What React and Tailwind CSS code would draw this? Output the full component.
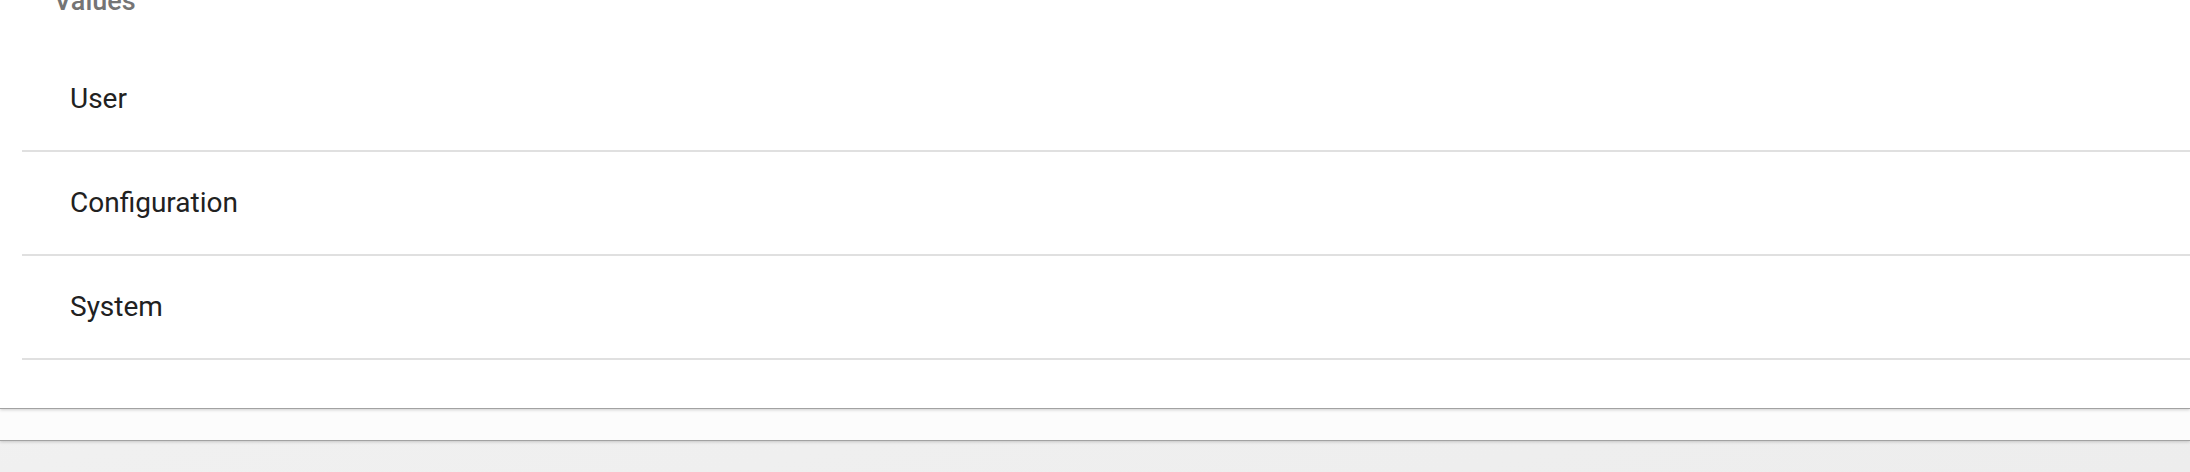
import React from 'react';

const items = ['User', 'Configuration', 'System'];

function ValuesCard() {
  return (
    <div className="relative z-20 -mt-[30px] bg-white pb-[48px] shadow-[0_1px_0_#a2a2a2,0_2px_3px_rgba(0,0,0,0.18)]">
      {/* subheader */}
      <div className="pt-[18px] pb-[34px] pl-[54px]">
        <div className="text-[27px] leading-[26px] font-medium text-[#757575]">Values</div>
      </div>
      <ul className="ml-[22px]">
        {items.map((label) => (
          <li
            key={label}
            className="flex h-[104px] items-center border-b-2 border-[#e0e0e0] pl-[48px] text-[28px] text-[#212121]"
          >
            {label}
          </li>
        ))}
      </ul>
    </div>
  );
}

export default function App() {
  return (
    <div
      className="relative h-[472px] w-full overflow-hidden bg-gradient-to-br from-[#f7f7f7] via-[#f0f0f0] to-[#ededed]"
      style={{ fontFamily: 'Roboto, "Noto Sans", sans-serif' }}
    >
      <ValuesCard />
      <div className="relative z-10 h-[32px] bg-[#fcfcfc] shadow-[0_1px_0_#a2a2a2,0_2px_3px_rgba(0,0,0,0.18)]" />
    </div>
  );
}
